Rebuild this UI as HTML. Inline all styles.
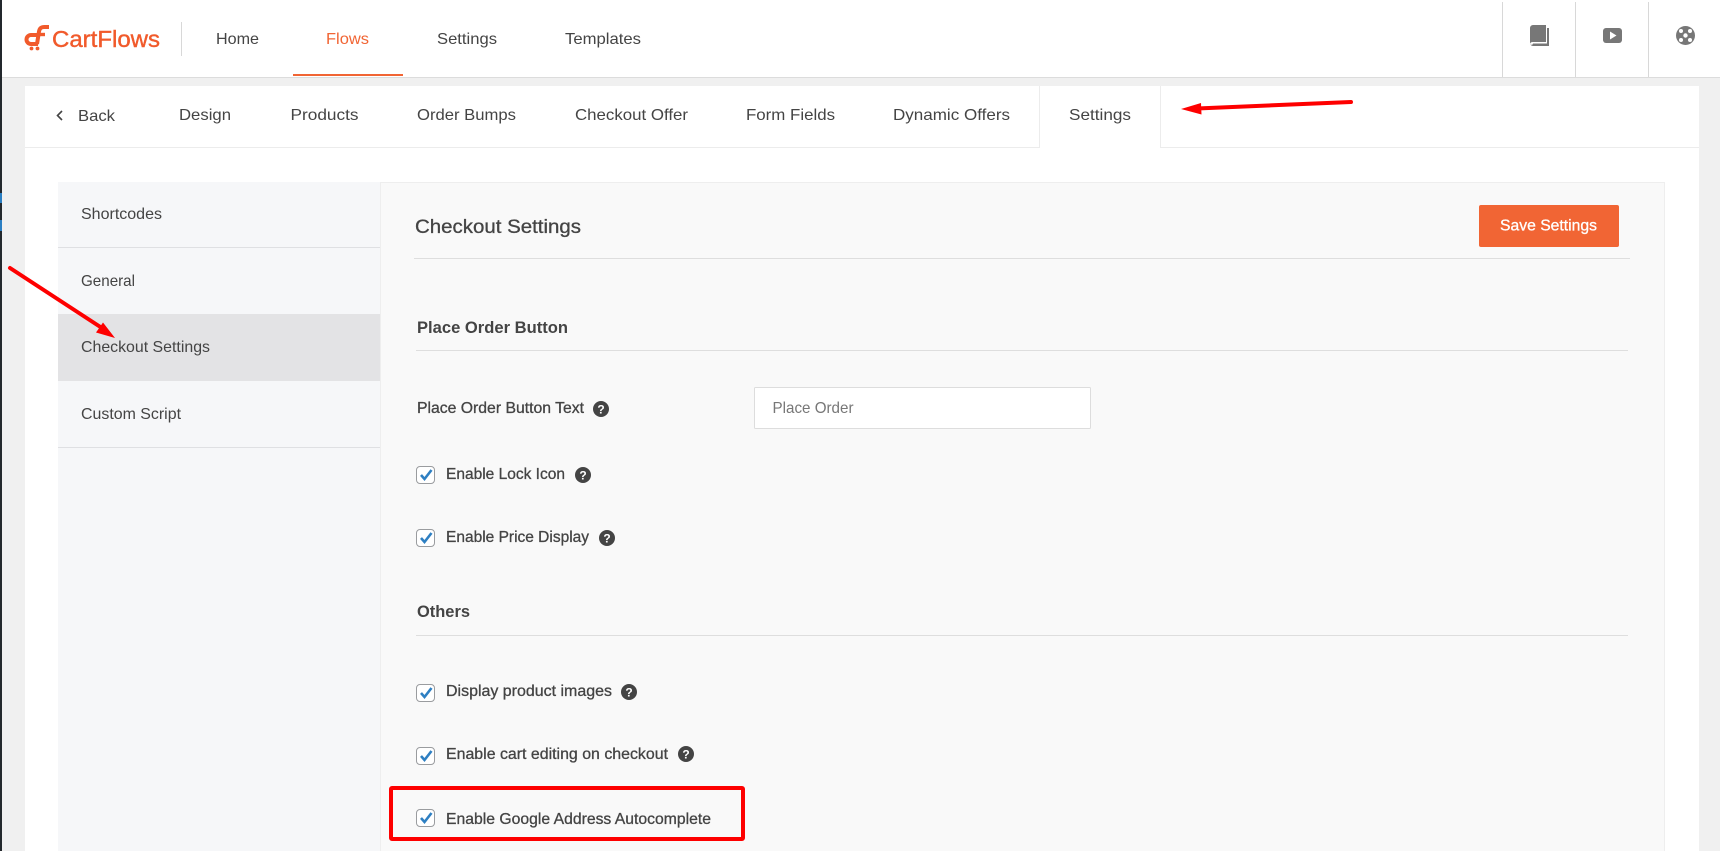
<!DOCTYPE html>
<html lang="en"><head><meta charset="utf-8"><title>CartFlows Checkout Settings</title>
<style>
html,body{margin:0;padding:0;width:1720px;height:851px;overflow:hidden;background:#f0f0f0}
svg{display:block}
text{font-family:"Liberation Sans",Arial,sans-serif;fill:#444;font-size:16px}
.m{stroke:#444;stroke-width:.3px}
.b{font-weight:700}
</style></head><body>
<svg width="1720" height="851" viewBox="0 0 1720 851" xmlns="http://www.w3.org/2000/svg">
<rect width="1720" height="851" fill="#f0f0f0"/>
<rect width="1720" height="77" fill="#fff"/>
<rect y="77" width="1720" height="1" fill="#dcdcdc"/>
<rect width="2" height="851" fill="#23282d"/>
<rect y="193" width="2" height="10" fill="#2b7fc3"/><rect y="220" width="2" height="11" fill="#2b7fc3"/>

<!-- logo -->
<g fill="none" stroke="#f15a2b">
<path d="M37 35h-6a4.500 4.500 0 0 0 0 9h7" stroke-width="4"/>
<path d="M49 27h-4.500c-3.500 0-5 1.500-5.500 4.500l-2 12.500" stroke-width="4"/>
<path d="M38 34.500h7" stroke-width="3.400"/>
</g>
<circle cx="31.500" cy="48.500" r="1.900" fill="#f15a2b"/><circle cx="37.500" cy="48.500" r="1.900" fill="#f15a2b"/>
<text x="52" y="47" textLength="108" lengthAdjust="spacingAndGlyphs" style="font-size:23px;fill:#f15a2b;stroke:#f15a2b;stroke-width:.4px">CartFlows</text>
<rect x="181" y="22" width="1" height="34" fill="#d8d8d8"/>

<!-- nav -->
<text x="216" y="44" textLength="43" lengthAdjust="spacingAndGlyphs">Home</text>
<text x="326" y="44" textLength="43" lengthAdjust="spacingAndGlyphs" style="fill:#f16534">Flows</text>
<rect x="293" y="74" width="110" height="2" fill="#f16534"/>
<text x="437" y="44" textLength="60" lengthAdjust="spacingAndGlyphs">Settings</text>
<text x="565" y="44" textLength="76" lengthAdjust="spacingAndGlyphs">Templates</text>

<!-- top-right icons -->
<g fill="#d8d8d8"><rect x="1502" y="2" width="1" height="75"/><rect x="1575" y="2" width="1" height="75"/><rect x="1648" y="2" width="1" height="75"/></g>
<path d="M1533 25h13v17h-13a3 3 0 0 0-3 1.500V28a3 3 0 0 1 3-3z" fill="#777"/>
<path d="M1530 43a3 3 0 0 0 3 3h16V28h-2v15.500h-14a1.500 1.500 0 0 1-3-.5z" fill="#777"/>
<rect x="1603" y="28" width="19" height="15" rx="3" fill="#777"/>
<path d="M1610 31.500l6.500 4-6.500 4z" fill="#fff"/>
<circle cx="1685.500" cy="35.500" r="9.500" fill="#777"/>
<g fill="#fff"><circle cx="1685.500" cy="35.500" r="2.200"/><circle cx="1681" cy="31" r="2"/><circle cx="1690" cy="31" r="2"/><circle cx="1681" cy="40" r="2"/><circle cx="1690" cy="40" r="2"/></g>

<!-- main panel -->
<rect x="25" y="86" width="1674" height="765" fill="#fff"/>
<rect x="25" y="147" width="1014" height="1" fill="#ececec"/>
<rect x="1160" y="147" width="539" height="1" fill="#ececec"/>
<rect x="1039" y="86" width="1" height="62" fill="#ececec"/>
<rect x="1160" y="86" width="1" height="62" fill="#ececec"/>
<path d="M62 111l-4.500 4.500 4.500 4.500" fill="none" stroke="#444" stroke-width="1.600"/>
<text x="78" y="121" textLength="37" lengthAdjust="spacingAndGlyphs">Back</text>
<text x="179" y="120" textLength="52" lengthAdjust="spacingAndGlyphs">Design</text>
<text x="290.500" y="120" textLength="68" lengthAdjust="spacingAndGlyphs">Products</text>
<text x="417" y="120" textLength="99" lengthAdjust="spacingAndGlyphs">Order Bumps</text>
<text x="575" y="120" textLength="113" lengthAdjust="spacingAndGlyphs">Checkout Offer</text>
<text x="746" y="120" textLength="89" lengthAdjust="spacingAndGlyphs">Form Fields</text>
<text x="893" y="120" textLength="117" lengthAdjust="spacingAndGlyphs">Dynamic Offers</text>
<text x="1069" y="120" textLength="62" lengthAdjust="spacingAndGlyphs">Settings</text>

<!-- sidebar -->
<rect x="58" y="182" width="322" height="669" fill="#f6f7f9"/>
<rect x="58" y="314" width="322" height="67" fill="#e3e3e5"/>
<g fill="#dfe0e3"><rect x="58" y="247" width="322" height="1"/><rect x="58" y="447" width="322" height="1"/></g>
<text x="81" y="219" textLength="81" lengthAdjust="spacingAndGlyphs">Shortcodes</text>
<text x="81" y="286" textLength="54" lengthAdjust="spacingAndGlyphs">General</text>
<text x="81" y="352" textLength="129" lengthAdjust="spacingAndGlyphs">Checkout Settings</text>
<text x="81" y="419" textLength="100" lengthAdjust="spacingAndGlyphs">Custom Script</text>

<!-- content -->
<rect x="380.500" y="182.500" width="1284" height="670" fill="#f9f9f9" stroke="#eeeeee"/>
<text x="415" y="233" textLength="166" lengthAdjust="spacingAndGlyphs" class="m" style="font-size:19px">Checkout Settings</text>
<rect x="1479" y="205" width="140" height="42" rx="2" fill="#f16534"/>
<text x="1500" y="230.500" textLength="97" lengthAdjust="spacingAndGlyphs" style="fill:#fff;stroke:#fff;stroke-width:.3px">Save Settings</text>
<rect x="414" y="258" width="1216" height="1" fill="#dedede"/>

<text x="417" y="333" textLength="151" lengthAdjust="spacingAndGlyphs" class="b" style="font-size:17px">Place Order Button</text>
<rect x="416" y="350" width="1212" height="1" fill="#dedede"/>
<text x="417" y="413" textLength="167" lengthAdjust="spacingAndGlyphs" class="m">Place Order Button Text</text>
<circle cx="601" cy="409" r="8" fill="#444"/><text x="601" y="413.500" text-anchor="middle" class="b" style="font-size:12px;fill:#fff">?</text>
<rect x="754.500" y="387.500" width="336" height="41" rx="1" fill="#fff" stroke="#dddddd"/>
<text x="772.500" y="413" textLength="81" lengthAdjust="spacingAndGlyphs" style="fill:#777">Place Order</text>

<g fill="#fff" stroke="#9a9c9f" stroke-width="1">
<rect x="416.500" y="466.500" width="18" height="17" rx="3.500"/>
<rect x="416.500" y="529.500" width="18" height="17" rx="3.500"/>
<rect x="416.500" y="684.500" width="18" height="17" rx="3.500"/>
<rect x="416.500" y="747.500" width="18" height="17" rx="3.500"/>
<rect x="416.500" y="809.500" width="18" height="17" rx="3.500"/>
</g>
<g fill="none" stroke="#2e7fc2" stroke-width="2.600">
<path d="M421 475l3.500 4 7-9"/>
<path d="M421 538l3.500 4 7-9"/>
<path d="M421 693l3.500 4 7-9"/>
<path d="M421 756l3.500 4 7-9"/>
<path d="M421 818l3.500 4 7-9"/>
</g>
<text x="446" y="479" textLength="119" lengthAdjust="spacingAndGlyphs" class="m">Enable Lock Icon</text>
<circle cx="583" cy="475" r="8" fill="#444"/><text x="583" y="479.500" text-anchor="middle" class="b" style="font-size:12px;fill:#fff">?</text>
<text x="446" y="542" textLength="143" lengthAdjust="spacingAndGlyphs" class="m">Enable Price Display</text>
<circle cx="607" cy="538" r="8" fill="#444"/><text x="607" y="542.500" text-anchor="middle" class="b" style="font-size:12px;fill:#fff">?</text>

<text x="417" y="617" textLength="53" lengthAdjust="spacingAndGlyphs" class="b" style="font-size:17px">Others</text>
<rect x="416" y="635" width="1212" height="1" fill="#dedede"/>
<text x="446" y="696" textLength="166" lengthAdjust="spacingAndGlyphs" class="m">Display product images</text>
<circle cx="629" cy="692" r="8" fill="#444"/><text x="629" y="696.500" text-anchor="middle" class="b" style="font-size:12px;fill:#fff">?</text>
<text x="446" y="759" textLength="222" lengthAdjust="spacingAndGlyphs" class="m">Enable cart editing on checkout</text>
<circle cx="686" cy="754" r="8" fill="#444"/><text x="686" y="758.500" text-anchor="middle" class="b" style="font-size:12px;fill:#fff">?</text>
<text x="446" y="824" textLength="265" lengthAdjust="spacingAndGlyphs" class="m">Enable Google Address Autocomplete</text>

<!-- annotations -->
<rect x="391" y="788" width="352" height="51" fill="none" stroke="#fe0000" stroke-width="4" rx="1"/>
<path d="M1351 102L1197 108.500" stroke="#fe0000" stroke-width="4" stroke-linecap="round"/>
<path d="M1181 109l20-6 .5 11.500z" fill="#fe0000"/>
<path d="M10 268L105 330" stroke="#fe0000" stroke-width="4" stroke-linecap="round"/>
<path d="M115 338l-19-5.500 7-10z" fill="#fe0000"/>
</svg>
</body></html>
